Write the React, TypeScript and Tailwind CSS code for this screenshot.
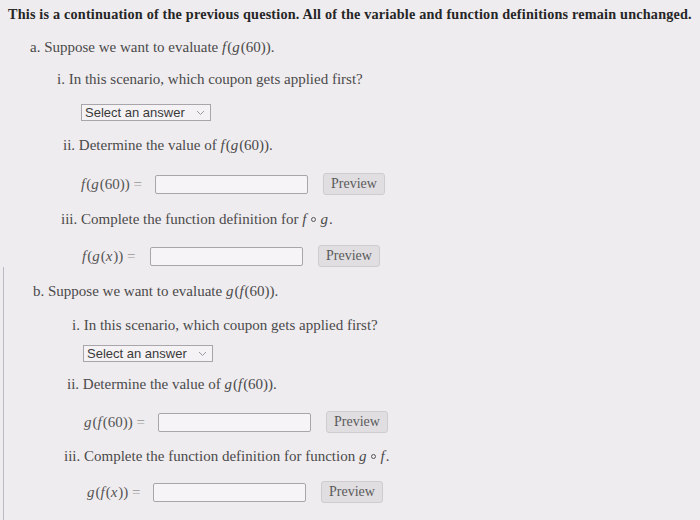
import React from 'react';

const serif = { fontFamily: '"Liberation Serif", "DejaVu Serif", serif' };

const M: React.FC<{ children: React.ReactNode }> = ({ children }) => (
  <span className="mr-[1px] italic">{children}</span>
);

// composition operator, drawn as a small hollow ring like the MathJax glyph
const Ring = () => (
  <span className="mx-[4px] inline-block h-[5px] w-[5px] rounded-full border border-[#555] align-[2px]" />
);

const SelectBox: React.FC<{ className?: string }> = ({ className = '' }) => (
  <div
    className={`flex h-[17px] w-[130px] items-center justify-between border border-[#a9a6ab] bg-[#f4f2f4] pl-[3px] pr-[3px] text-[13px] leading-none text-[#3a3a3a] ${className}`}
    style={{ fontFamily: '"Liberation Sans", Arial, sans-serif' }}
  >
    <span>Select an answer</span>
    <svg width="9" height="6" viewBox="0 0 9 6" className="mr-[2px]">
      <path d="M1 1 L4.5 4.5 L8 1" fill="none" stroke="#9a98a0" strokeWidth="1" />
    </svg>
  </div>
);

const AnswerRow: React.FC<{
  label: React.ReactNode;
  className?: string;
  labelWidth: string;
}> = ({ label, className = '', labelWidth }) => (
  <div className={`flex h-[22px] items-center ${className}`}>
    <div className={`${labelWidth} shrink-0 text-[15px] leading-[20px] text-[#555]`}>
      {label} <span className="text-[#999]">=</span>
    </div>
    <div className="h-[19px] w-[153px] rounded-[2px] border border-[#a8a6aa] bg-[#f6f4f6]" />
    <button className="ml-[15px] h-[22px] w-[62px] rounded-[3px] border border-[#cfccd0] bg-[#e1dee2] text-[14px] leading-none text-[#5a5a5a]">
      Preview
    </button>
  </div>
);

const Line: React.FC<{ className?: string; children: React.ReactNode }> = ({ className = '', children }) => (
  <div className={`text-[15px] leading-[20px] ${className}`}>{children}</div>
);

export default function App() {
  return (
    <div className="h-[520px] w-[700px] overflow-hidden bg-[#efecef] text-[#4a4a4a]" style={serif}>
      <div className="pl-[8px] pt-[4px] text-[14.2px] leading-[20px] font-bold tracking-[0.2px] text-[#262626]">
        This is a continuation of the previous question. All of the variable and function definitions remain unchanged.
      </div>

      {/* part a */}
      <Line className="mt-[13px] pl-[30px]">
        a. Suppose we want to evaluate <M>f</M>(<M>g</M>(60)).
      </Line>
      <Line className="mt-[12px] pl-[57px]">
        i. In this scenario, which coupon gets applied first?
      </Line>
      <SelectBox className="ml-[81px] mt-[15px]" />
      <Line className="mt-[14px] pl-[63px]">
        ii. Determine the value of <M>f</M>(<M>g</M>(60)).
      </Line>
      <AnswerRow
        className="ml-[81px] mt-[18px]"
        labelWidth="w-[74px]"
        label={<><M>f</M>(<M>g</M>(60))</>}
      />
      <Line className="mt-[14px] pl-[61px]">
        iii. Complete the function definition for <M>f</M><Ring /><M>g</M>.
      </Line>
      <AnswerRow
        className="ml-[82px] mt-[16px]"
        labelWidth="w-[68px]"
        label={<><M>f</M>(<M>g</M>(<M>x</M>))</>}
      />

      {/* part b */}
      <div className="ml-[3px] h-[253px] border-l border-[#bdb8c4] pt-[14px]">
        <Line className="pl-[29px]">
          b. Suppose we want to evaluate <M>g</M>(<M>f</M>(60)).
        </Line>
        <Line className="mt-[14px] pl-[68px]">
          i. In this scenario, which coupon gets applied first?
        </Line>
        <SelectBox className="ml-[79px] mt-[10px]" />
        <Line className="mt-[12px] pl-[63px]">
          ii. Determine the value of <M>g</M>(<M>f</M>(60)).
        </Line>
        <AnswerRow
          className="ml-[80px] mt-[17px]"
          labelWidth="w-[74px]"
          label={<><M>g</M>(<M>f</M>(60))</>}
        />
        <Line className="mt-[13px] pl-[60px]">
          iii. Complete the function definition for function <M>g</M><Ring /><M>f</M>.
        </Line>
        <AnswerRow
          className="ml-[83px] mt-[15px]"
          labelWidth="w-[66px]"
          label={<><M>g</M>(<M>f</M>(<M>x</M>))</>}
        />
      </div>
    </div>
  );
}
